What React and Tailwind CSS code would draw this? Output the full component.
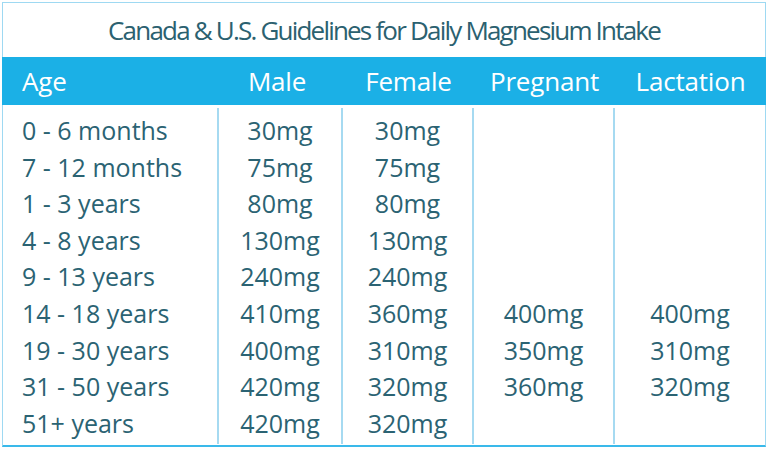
const rows = [
  ['0 - 6 months', '30mg', '30mg', '', ''],
  ['7 - 12 months', '75mg', '75mg', '', ''],
  ['1 - 3 years', '80mg', '80mg', '', ''],
  ['4 - 8 years', '130mg', '130mg', '', ''],
  ['9 - 13 years', '240mg', '240mg', '', ''],
  ['14 - 18 years', '410mg', '360mg', '400mg', '400mg'],
  ['19 - 30 years', '400mg', '310mg', '350mg', '310mg'],
  ['31 - 50 years', '420mg', '320mg', '360mg', '320mg'],
  ['51+ years', '420mg', '320mg', '', ''],
]

const cols = 'grid grid-cols-[217px_124px_131px_141px_1fr]'

export default function App() {
  return (
    <div className="w-[768px] h-[450px] bg-white pt-[2px] pl-[2px]" style={{ fontFamily: '"Open Sans", "Noto Sans", sans-serif' }}>
      <div className="w-[764px] h-[445px] border border-[#9ed9f2] border-b-2 border-b-[#3ab9ea] flex flex-col">
        <div className="h-[54px] flex items-center justify-center text-[26px] text-[#2b6170] tracking-[-1.8px]">
          Canada &amp; U.S. Guidelines for Daily Magnesium Intake
        </div>
        <div className={`${cols} h-[48px] bg-[#1bb0e6] text-white text-[26px] tracking-[-0.2px] items-center -mx-px`}>
          <div className="pl-[20px]">Age</div>
          <div className="text-center -ml-2">Male</div>
          <div className="text-center">Female</div>
          <div className="text-center">Pregnant</div>
          <div className="text-center">Lactation</div>
        </div>
        <div className={`${cols} flex-1 pt-[3px] pb-[1px] text-[25px] text-[#2b6373] -ml-px`}>
          {[0, 1, 2, 3, 4].map(c => (
            <div key={c} className={`pt-[4px] ${c < 4 ? 'border-r-2 border-[#a6daf1]' : ''} ${c === 0 ? 'pl-[20px]' : 'text-center'}`}>
              {rows.map((r, i) => (
                <div key={i} className="h-[36.6px] leading-[36.6px] whitespace-nowrap">{r[c] || '\u00a0'}</div>
              ))}
            </div>
          ))}
        </div>
      </div>
    </div>
  )
}
